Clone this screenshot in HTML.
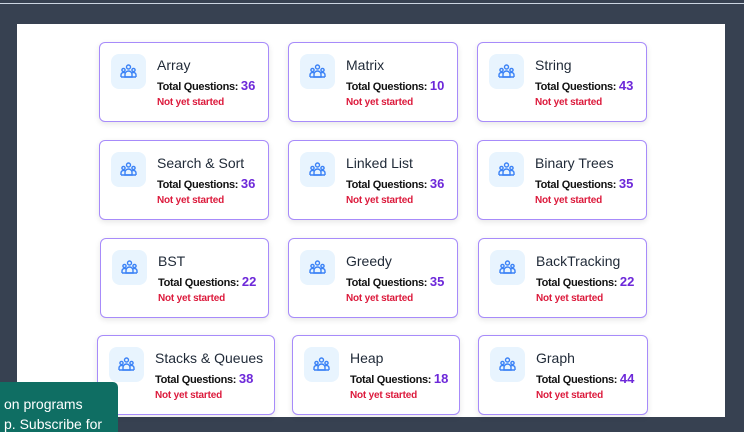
<!DOCTYPE html>
<html><head><style>
*{margin:0;padding:0;box-sizing:border-box}
body{width:744px;height:426px;background:#374151;position:relative;overflow:hidden;font-family:"Liberation Sans",sans-serif}
.line{position:absolute;left:0;top:3px;width:744px;height:1px;background:#cbd5e1}
.panel{position:absolute;left:17px;top:24px;width:708px;height:393px;background:#fff}
.card{position:absolute;height:80px;border:1px solid #a78bfa;border-radius:6px;background:#fff;box-shadow:0 2px 6px rgba(0,0,0,.1)}
.ic{position:absolute;left:11px;top:11px;width:35px;height:35px;border-radius:8px;background:#e8f4fe}
.ic svg{position:absolute;left:9px;top:9px}
.t{position:absolute;left:57px;top:14px;font-size:14px;color:#1f2937;white-space:nowrap}
.q{position:absolute;left:57px;top:35px;font-size:11px;letter-spacing:-0.3px;font-weight:bold;color:#111;white-space:nowrap}
.q b{color:#6d28d9;font-size:13px;letter-spacing:0}
.s{position:absolute;left:57px;top:54px;font-size:10px;font-weight:bold;color:#dc1a3c;white-space:nowrap;letter-spacing:-0.2px}
.toast{position:absolute;left:0;top:382px;width:118px;height:50px;background:#0f6e63;border-radius:0 5px 0 0;color:#fff;font-size:14px;line-height:20px;padding:12px 0 0 4px;white-space:nowrap;overflow:hidden}
</style></head><body>
<div class="line"></div>
<div class="panel"></div>
<div id="c"></div>
<div class="toast">on programs<br>p. Subscribe for</div>
<script>
var icon='<svg width="17" height="17" viewBox="0 0 17 17" fill="none" stroke="#3b82f6" stroke-width="1.4"><circle cx="8.5" cy="4" r="2"/><circle cx="3.5" cy="7" r="1.6"/><circle cx="13.5" cy="7" r="1.6"/><path d="M5 14v-2.5a3.5 3.5 0 0 1 7 0V14z"/><path d="M1 14v-2a2.5 2.5 0 0 1 4-2M16 14v-2a2.5 2.5 0 0 0-4-2M1 14h15"/></svg>';
var d=[
[99,42,170,"Array",36],[288,42,170,"Matrix",10],[477,42,170,"String",43],
[99,140,170,"Search & Sort",36],[288,140,170,"Linked List",36],[477,140,170,"Binary Trees",35],
[100,238,169,"BST",22],[288,238,170,"Greedy",35],[478,238,169,"BackTracking",22],
[97,335,178,"Stacks & Queues",38],[292,335,168,"Heap",18],[478,335,170,"Graph",44]];
var h='';d.forEach(function(c){h+='<div class="card" style="left:'+c[0]+'px;top:'+c[1]+'px;width:'+c[2]+'px"><div class="ic">'+icon+'</div><div class="t">'+c[3].replace('&','&amp;')+'</div><div class="q">Total Questions: <b>'+c[4]+'</b></div><div class="s">Not yet started</div></div>'});
document.getElementById('c').innerHTML=h;
</script>
</body></html>
